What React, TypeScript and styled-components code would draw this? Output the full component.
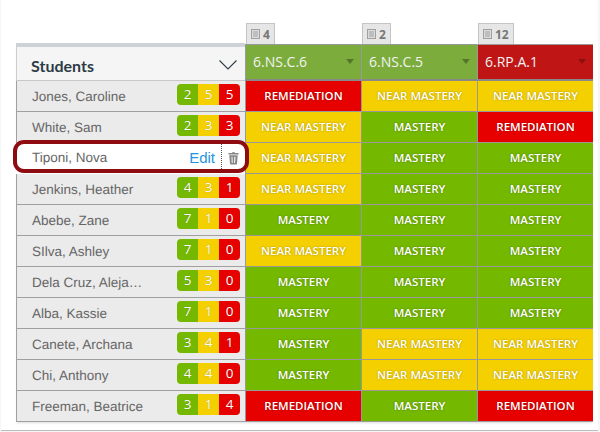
import React from 'react'
import styled, { createGlobalStyle } from 'styled-components'

const GlobalStyle = createGlobalStyle`
  html, body {
    margin: 0;
    padding: 0;
    background: #f6f6f6;
  }
`

type Level = 'm' | 'n' | 'r'

const STUDENTS: Array<{ name: string; counts: number[]; cells: Level[] }> = [
  { name: 'Jones, Caroline', counts: [2, 5, 5], cells: ['r', 'n', 'n'] },
  { name: 'White, Sam', counts: [2, 3, 3], cells: ['n', 'm', 'r'] },
  { name: 'Tiponi, Nova', counts: [], cells: ['n', 'm', 'm'] },
  { name: 'Jenkins, Heather', counts: [4, 3, 1], cells: ['n', 'm', 'm'] },
  { name: 'Abebe, Zane', counts: [7, 1, 0], cells: ['m', 'm', 'm'] },
  { name: 'SIlva, Ashley', counts: [7, 1, 0], cells: ['n', 'm', 'm'] },
  { name: 'Dela Cruz, Aleja…', counts: [5, 3, 0], cells: ['m', 'm', 'm'] },
  { name: 'Alba, Kassie', counts: [7, 1, 0], cells: ['m', 'm', 'm'] },
  { name: 'Canete, Archana', counts: [3, 4, 1], cells: ['m', 'n', 'n'] },
  { name: 'Chi, Anthony', counts: [4, 4, 0], cells: ['m', 'n', 'n'] },
  { name: 'Freeman, Beatrice', counts: [3, 1, 4], cells: ['r', 'm', 'r'] },
]

const COLUMNS = [
  { code: '6.NS.C.6', count: 4, bad: false },
  { code: '6.NS.C.5', count: 2, bad: false },
  { code: '6.RP.A.1', count: 12, bad: true },
]

const LABELS = { m: 'MASTERY', n: 'NEAR MASTERY', r: 'REMEDIATION' }
const FILLS = { m: '#74b800', n: '#f4d000', r: '#e60000' }

function NoteIcon() {
  return (
    <svg width="9" height="10" viewBox="0 0 9 10">
      <rect x="0.5" y="0.5" width="8" height="9" fill="#dcdcdc" stroke="#a0a0a0" />
      <path d="M2 3h5M2 5h5M2 7h5" stroke="#a0a0a0" strokeWidth="1" />
    </svg>
  )
}

function TrashIcon() {
  return (
    <svg width="11" height="14" viewBox="0 0 12 14">
      <path d="M4.5 1.5V.6h3v.9H11.5v1.6H.5V1.5z" fill="#858585" />
      <path
        d="M1.4 4h9.2l-.8 9.2c0 .5-.4.8-.8.8H3c-.4 0-.8-.3-.8-.8zM3.8 5.5l.3 7h1l-.2-7zM6.9 5.5l-.2 7h1l.5-7z"
        fill="#858585"
        fillRule="evenodd"
      />
    </svg>
  )
}

function App() {
  return (
    <>
      <GlobalStyle />
      <Frame>
        <Tags>
          {COLUMNS.map((col) => (
            <TagSlot key={col.code}>
              <Tag>
                <NoteIcon />
                {col.count}
              </Tag>
            </TagSlot>
          ))}
        </Tags>
        <Table>
          <StudentsHead>
            <span>Students</span>
            <svg width="18" height="10" viewBox="0 0 18 10">
              <path d="M.5.5L9 9l8.5-8.5" fill="none" stroke="#2d3b45" strokeWidth="1.1" />
            </svg>
          </StudentsHead>
          {COLUMNS.map((col) => (
            <ColumnHead key={col.code} $bad={col.bad}>
              {col.code}
              <Caret $bad={col.bad} />
            </ColumnHead>
          ))}
          {STUDENTS.map((student) => (
            <React.Fragment key={student.name}>
              {student.counts.length > 0 ? (
                <NameCell>
                  <Name>{student.name}</Name>
                  <Counts>
                    <Count $level="m">{student.counts[0]}</Count>
                    <Count $level="n">{student.counts[1]}</Count>
                    <Count $level="r">{student.counts[2]}</Count>
                  </Counts>
                </NameCell>
              ) : (
                <ActiveCell>
                  <ActiveName>{student.name}</ActiveName>
                  <EditLink>Edit</EditLink>
                  <Trash>
                    <TrashIcon />
                  </Trash>
                </ActiveCell>
              )}
              {student.cells.map((level, i) => (
                <ScoreCell key={i} $level={level}>
                  {LABELS[level]}
                </ScoreCell>
              ))}
            </React.Fragment>
          ))}
        </Table>
      </Frame>
    </>
  )
}

const Frame = styled.div`
  box-sizing: border-box;
  width: 597px;
  height: 431px;
  margin-left: 1px;
  padding: 23px 0 0 15px;
  background: #fff;
  border-bottom: 1px solid #bbb;
`

const Tags = styled.div`
  display: grid;
  grid-template-columns: repeat(3, 116px);
  height: 21px;
  padding-left: 230px;
`

const TagSlot = styled.div`
  display: flex;
`

const Tag = styled.div`
  box-sizing: border-box;
  display: flex;
  align-items: center;
  gap: 3px;
  height: 21px;
  padding: 0 4px;
  background: #e6e6e6;
  border: 1px solid #c4c4c4;
  border-bottom: 0;
  font: 700 12px 'Open Sans', sans-serif;
  color: #777;
`

const Table = styled.div`
  position: relative;
  display: grid;
  grid-template-columns: 229px repeat(3, 116px);
  grid-template-rows: 37px repeat(11, 31px);
  width: 577px;
  box-shadow: 0 2px 2px -1px #ddd;
`

const StudentsHead = styled.div`
  box-sizing: border-box;
  display: flex;
  align-items: center;
  justify-content: space-between;
  padding: 3px 8px 0 14px;
  margin-top: -1px;
  background: #f5f5f5;
  border-top: 4px solid #cdd2d6;
  border-left: 1px solid #ccc;
  border-bottom: 1px solid #c8c8c8;
  font: 700 16px Lato, sans-serif;
  color: #2d3b45;
`

const ColumnHead = styled.div<{ $bad: boolean }>`
  box-sizing: border-box;
  display: flex;
  align-items: center;
  justify-content: space-between;
  padding: 0 7px 2px 7px;
  background: ${(p) => (p.$bad ? '#c01515' : '#7cad3c')};
  border-top: 1px solid #999;
  border-left: 1px solid #999;
  border-bottom: 2px solid #888;
  font: 400 14px 'Open Sans', sans-serif;
  color: #f2f2f2;
`

const Caret = styled.span<{ $bad: boolean }>`
  width: 0;
  height: 0;
  border-left: 4px solid transparent;
  border-right: 4px solid transparent;
  border-top: 5px solid ${(p) => (p.$bad ? '#8c1010' : '#55752b')};
`

const NameCell = styled.div`
  box-sizing: border-box;
  display: flex;
  align-items: center;
  justify-content: space-between;
  padding: 0 5px 0 15px;
  background: #ebebeb;
  border-left: 1px solid #a0a0a0;
  border-bottom: 1px solid #a0a0a0;
`

const ActiveCell = styled.div`
  box-sizing: border-box;
  position: relative;
  display: flex;
  align-items: center;
  margin: -3px -4px 1px -3px;
  padding-left: 15px;
  background: #fff;
  border: 4px solid #8e0b12;
  border-radius: 11px;
  z-index: 1;
`

const Name = styled.span`
  flex: 1;
  font: 400 13.5px 'Liberation Sans', sans-serif;
  text-rendering: geometricPrecision;
  color: #666;
`

const ActiveName = styled(Name)`
  padding-top: 2px;
`

const EditLink = styled.span`
  padding-top: 1px;
  margin-right: 6px;
  font: 400 15px 'Liberation Sans', sans-serif;
  color: #1f94e0;
`

const Trash = styled.span`
  display: flex;
  align-items: center;
  align-self: stretch;
  padding: 3px 0 0 6px;
  margin-right: 6px;
  border-left: 1px dotted #555;
`

const Counts = styled.div`
  display: flex;
  margin-bottom: 3px;
  border-radius: 4px;
  overflow: hidden;
`

const Count = styled.span<{ $level: Level }>`
  width: 21px;
  height: 21px;
  text-align: center;
  background: ${(p) => FILLS[p.$level]};
  font: 400 13.5px/20px 'Open Sans', sans-serif;
  color: #fff;
  text-shadow: 0 0 1px rgba(0, 0, 0, 0.3);
`

const ScoreCell = styled.div<{ $level: Level }>`
  box-sizing: border-box;
  display: flex;
  align-items: center;
  justify-content: center;
  padding-bottom: 1px;
  background: ${(p) => FILLS[p.$level]};
  border-left: 1px solid #999;
  border-bottom: 1px solid #999;
  font: 600 11.5px 'Open Sans', sans-serif;
  color: #fff;
  text-shadow: 0 0 2px rgba(0, 0, 0, 0.35);
`

export default App
